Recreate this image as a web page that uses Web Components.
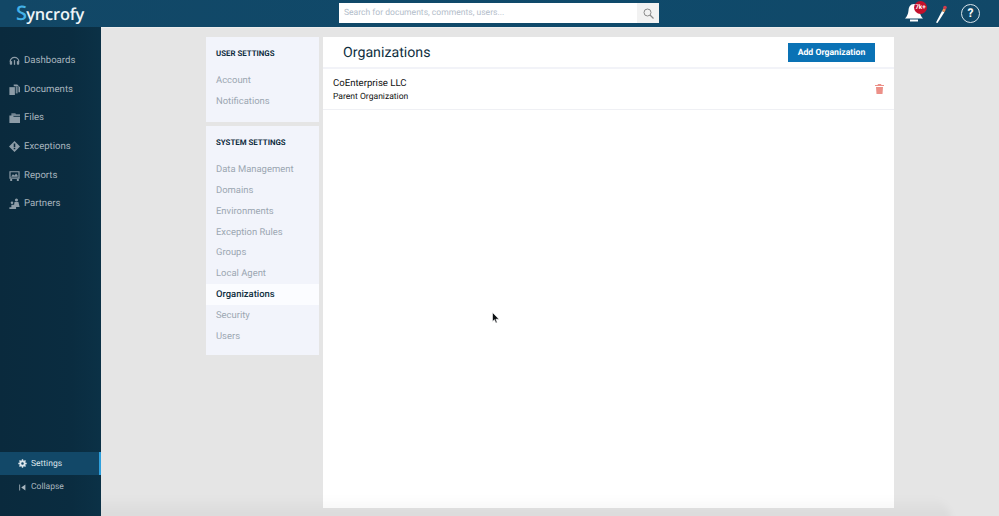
<!DOCTYPE html>
<html>
<head>
<meta charset="utf-8">
<title>Organizations</title>
<style>
  html, body { margin: 0; height: 100%; overflow: hidden; }
  body { font-family: Roboto, "Liberation Sans", sans-serif; background: #e5e5e5; text-rendering: geometricPrecision; }
</style>
</head>
<body>
<app-shell>
  <top-bar slot="top"></top-bar>
  <side-nav slot="side">
    <nav-link icon="dash">Dashboards</nav-link>
    <nav-link icon="docs">Documents</nav-link>
    <nav-link icon="files">Files</nav-link>
    <nav-link icon="warn">Exceptions</nav-link>
    <nav-link icon="reports">Reports</nav-link>
    <nav-link icon="partners">Partners</nav-link>
    <nav-foot slot="foot" icon="gear" active>Settings</nav-foot>
    <nav-foot slot="foot" icon="collapse">Collapse</nav-foot>
  </side-nav>
  <settings-card title="USER SETTINGS" slot="menu" style="height:85px">
    <settings-link>Account</settings-link>
    <settings-link>Notifications</settings-link>
  </settings-card>
  <settings-card title="SYSTEM SETTINGS" slot="menu" style="height:229px">
    <settings-link>Data Management</settings-link>
    <settings-link>Domains</settings-link>
    <settings-link>Environments</settings-link>
    <settings-link>Exception Rules</settings-link>
    <settings-link>Groups</settings-link>
    <settings-link>Local Agent</settings-link>
    <settings-link active>Organizations</settings-link>
    <settings-link>Security</settings-link>
    <settings-link>Users</settings-link>
  </settings-card>
  <org-panel slot="main">
    <org-row name="CoEnterprise LLC" role="Parent Organization"></org-row>
  </org-panel>
</app-shell>

<script>
const icons = {
  dash: '<path d="M1.5 8.500a5.500 5.500 0 0 1 11 0" fill="none" stroke="currentColor" stroke-width="1.6"/><rect x="1" y="7.500" width="3" height="5" rx="1"/><rect x="10" y="7.500" width="3" height="5" rx="1"/><path d="M6.200 6.500h1.600v6H6.200z"/>',
  docs: '<path d="M.5 4h7v10h-7z"/><path d="M8.500 3H11v9H8.500z" opacity=".8"/><path d="M6 .5h4.500L14 4v6.500h-2V3H6z"/>',
  files: '<path d="M3 1.500h5l1 1.500h5v2H3z" opacity=".8"/><path d="M.5 4.500h4.500l1 1.500h8v8H.5z"/>',
  warn: '<path fill-rule="evenodd" d="M7 0l7 7-7 7-7-7zM6 3.300v4.500h2V3.300zM6 8.800v1.800h2V8.800z"/>',
  reports: '<path fill-rule="evenodd" d="M.5 1.500h13v9.500H.5zM2 3v6.500h10V3z"/><path d="M3 8l2-2.500 2 1.500 2-2.500L11 7v1.500H3zM1.500 11.500h2.500V14H1.500zM10 11.500h2.500V14H10z"/>',
  partners: '<circle cx="9.500" cy="2.500" r="2"/><path d="M7 5h5l1.500 6.500H9V14H.5v-2.300H3V8.500h3.500z"/><circle cx="3.800" cy="6" r="1.600"/>',
  gear: '<path fill-rule="evenodd" d="M6 .5h2l.3 1.700 1.200.5L11 1.700l1.300 1.300-1 1.500.5 1.200 1.700.3v2l-1.700.3-.5 1.200 1 1.500-1.300 1.300-1.500-1-1.200.5L8 13.500H6l-.3-1.700-1.200-.5-1.500 1-1.300-1.300 1-1.500-.5-1.200L.5 8V6l1.700-.3.500-1.200-1-1.500L3 1.700l1.500 1 1.200-.5zM7 5a2 2 0 1 0 0 4 2 2 0 0 0 0-4z"/>',
  collapse: '<path d="M2 2.500h1.300v9H2zM11.500 2.500v9L5 7z"/>'
};

class AppShell extends HTMLElement {
  constructor() {
    super();
    this.attachShadow({ mode: 'open' });
    this.shadowRoot.innerHTML = `
      <style>
        :host { display: grid; grid-template: 27px 1fr / 101px 1fr; height: 516px; position: relative; overflow: hidden; }
        .top { grid-column: 1 / 3; }
        .content { display: flex; gap: 4px; padding: 9px 0 8px 105px; min-height: 0; background: #e5e5e5; border-top: 1px solid #ededed; box-sizing: border-box; }
        .menu { display: flex; flex-direction: column; gap: 4px; width: 113px; flex: none; }
        .main { width: 571px; flex: none; display: flex; position: relative; z-index: 1; }
        .shade-clip { position: absolute; left: 101px; right: 0; bottom: 0; height: 30px; overflow: hidden; z-index: 1; pointer-events: none; }
        .shade { position: absolute; left: -10px; right: 48px; bottom: -4px; height: 24px; border-top-right-radius: 24px; background: linear-gradient(rgba(0,0,0,0), rgba(0,0,0,.05)); filter: blur(3px); }
        .cursor { position: absolute; left: 492px; top: 312px; z-index: 2; }
      </style>
      <div class="top"><slot name="top"></slot></div>
      <slot name="side"></slot>
      <div class="content">
        <div class="menu"><slot name="menu"></slot></div>
        <div class="main"><slot name="main"></slot></div>
      </div>
      <div class="shade-clip"><div class="shade"></div></div>
      <svg class="cursor" width="8" height="12" viewBox="0 0 8 12"><path d="M.5.500v9l2-1.800 1.300 3.300 1.400-.6-1.300-3.200H7z" fill="#0b0f12" stroke="#fff" stroke-width=".6"/></svg>
    `;
  }
}

class TopBar extends HTMLElement {
  constructor() {
    super();
    this.attachShadow({ mode: 'open' });
    this.shadowRoot.innerHTML = `
      <style>
        :host { display: flex; align-items: center; height: 27px; background: linear-gradient(90deg, #124766, #0f4a6b 60%, #114868); position: relative; color: #fff; }
        .logo { position: absolute; left: 16px; top: -1px; font: 600 16.400px/28px "Open Sans", "Liberation Sans", sans-serif; letter-spacing: -.2px; display: flex; align-items: baseline; color: #eef4f7; }
        .logo b { color: #43b2e8; font-weight: 600; font-size: 20px; margin-right: -.5px; }
        .search { margin-left: 339px; width: 320px; height: 20px; margin-top: -1px; background: #fff; display: flex; align-items: center; box-sizing: border-box; }
        .search span { flex: 1; padding-left: 5px; font-size: 8.550px; color: #b3bdca; }
        .search i { width: 22px; height: 20px; background: #f2f2f2; display: flex; align-items: center; justify-content: center; }
        .tools { margin-left: auto; display: flex; align-items: center; padding-right: 19px; }
        .bell { position: relative; width: 18px; height: 20px; display: block; }
        .badge { position: absolute; left: 9px; top: -2.500px; width: 13px; height: 13px; border-radius: 50%; background: #c3112c; font-size: 6.500px; font-weight: 700; line-height: 13px; text-align: center; }
        .wand { margin-left: 12px; }
        .help { margin-left: 14px; width: 19px; height: 19px; box-sizing: border-box; border: 1px solid #d8e3ea; border-radius: 50%; font-size: 12px; font-weight: 700; line-height: 17px; text-align: center; }
      </style>
      <div class="logo"><b>S</b>yncrofy</div>
      <div class="search">
        <span>Search for documents, comments, users...</span>
        <i><svg width="11" height="11" viewBox="0 0 11 11" fill="none" stroke="#8b8b8b" stroke-width="1"><circle cx="4.500" cy="4.500" r="3.500"/><path d="M7 7l3.500 3.500" stroke-width="1.300"/></svg></i>
      </div>
      <div class="tools">
        <div class="bell">
          <svg width="18" height="20" viewBox="0 0 18 20" fill="#fff"><path d="M9 0C5 0 3.800 3 3.500 6.500 3.200 10 2 12.500 0 14.500h18c-2-2-3.200-4.500-3.500-8C14.200 3 13 0 9 0z"/><path d="M5 15.500h8V17.500H5z"/></svg>
          <span class="badge">7k+</span>
        </div>
        <svg class="wand" width="12" height="18" viewBox="0 0 12 18"><path d="M1 17.500L7 6l2.400 1.300L2.500 18z" fill="#fff"/><path d="M7 6l1.500-2.800 2.400 1.300-1.500 2.800z" fill="#e8925c"/><circle cx="10" cy="2.500" r="1.800" fill="#cf3b4c"/></svg>
        <div class="help">?</div>
      </div>
    `;
  }
}

class SideNav extends HTMLElement {
  constructor() {
    super();
    this.attachShadow({ mode: 'open' });
    this.shadowRoot.innerHTML = `
      <style>
        :host { display: flex; flex-direction: column; width: 101px; height: 489px; background: linear-gradient(90deg, #0a2a3d, #0a2c40 70%, #0b3146); }
        .links { display: flex; flex-direction: column; padding-top: 19.400px; }
        .foot { margin-top: auto; display: flex; flex-direction: column; padding-bottom: 17px; }
      </style>
      <div class="links"><slot></slot></div>
      <div class="foot"><slot name="foot"></slot></div>
    `;
  }
}

class NavLink extends HTMLElement {
  constructor() {
    super();
    this.attachShadow({ mode: 'open' });
    this.shadowRoot.innerHTML = `
      <style>
        :host { display: flex; align-items: center; height: 28.600px; padding-left: 9px; color: #a9b6bf; font-size: 9.600px; }
        svg { width: 11px; height: 11px; margin-right: 4px; fill: #8d9ca7; color: #8d9ca7; flex: none; }
      </style>
      <svg viewBox="0 0 14 14">${icons[this.getAttribute('icon')]}</svg><slot></slot>
    `;
  }
}

class NavFoot extends HTMLElement {
  constructor() {
    super();
    this.attachShadow({ mode: 'open' });
    const active = this.hasAttribute('active');
    this.shadowRoot.innerHTML = `
      <style>
        :host { display: flex; align-items: center; box-sizing: border-box; height: ${active ? 23 : 24}px; padding-left: 18px; font-size: 8.500px;
          color: ${active ? '#dde6ec' : '#a9b6bf'}; background: ${active ? '#124868' : 'none'}; border-right: ${active ? '2px solid #2e9fdc' : '0'}; }
        svg { width: 9px; height: 9px; margin-right: 4px; fill: currentColor; flex: none; }
      </style>
      <svg viewBox="0 0 14 14">${icons[this.getAttribute('icon')]}</svg><slot></slot>
    `;
  }
}

class SettingsCard extends HTMLElement {
  constructor() {
    super();
    this.attachShadow({ mode: 'open' });
    this.shadowRoot.innerHTML = `
      <style>
        :host { display: block; background: #f2f4fb; box-sizing: border-box; padding-top: 12px; flex: none; }
        h3 { margin: 0 0 11.400px; padding-left: 10px; font-size: 7.850px; line-height: 10px; font-weight: 700; color: #0e2c3e; }
      </style>
      <h3>${this.getAttribute('title')}</h3>
      <slot></slot>
    `;
  }
}

class SettingsLink extends HTMLElement {
  constructor() {
    super();
    this.attachShadow({ mode: 'open' });
    const active = this.hasAttribute('active');
    this.shadowRoot.innerHTML = `
      <style>
        :host { display: flex; align-items: center; height: 20.800px; padding-left: 10px; font-size: 9.450px;
          color: ${active ? '#10303f' : '#9ca7b2'}; background: ${active ? '#fbfcff' : 'none'}; font-weight: ${active ? 500 : 400}; }
      </style>
      <slot></slot>
    `;
  }
}

class OrgPanel extends HTMLElement {
  constructor() {
    super();
    this.attachShadow({ mode: 'open' });
    this.shadowRoot.innerHTML = `
      <style>
        :host { display: block; width: 571px; background: #fff; }
        header { display: flex; align-items: center; justify-content: space-between; height: 30px; padding: 0 19px 0 20px; border-bottom: 2px solid #f2f3f8; }
        h1 { margin: 1px 0 0; font-size: 14.200px; font-weight: 400; color: #10303f; }
        button { width: 87px; height: 19px; border: 0; padding: 1px 0 0; background: #0a72b5; color: #fff; font: 700 8.700px Roboto, sans-serif; text-rendering: geometricPrecision; }
      </style>
      <header><h1>Organizations</h1><button>Add Organization</button></header>
      <slot></slot>
    `;
  }
}

class OrgRow extends HTMLElement {
  constructor() {
    super();
    this.attachShadow({ mode: 'open' });
    this.shadowRoot.innerHTML = `
      <style>
        :host { display: flex; align-items: center; justify-content: space-between; box-sizing: border-box; height: 41px; padding: 0 10px; border-bottom: 1px solid #eff0f4; }
        .text { padding-top: 2px; }
        .name { font-size: 9.600px; line-height: 13px; color: #111; }
        .role { font-size: 8.550px; line-height: 13px; color: #111; margin-top: 1px; }
        svg { margin-bottom: 1px; }
      </style>
      <div class="text"><div class="name">${this.getAttribute('name')}</div><div class="role">${this.getAttribute('role')}</div></div>
      <svg width="9" height="10" viewBox="0 0 9 10" fill="#ec9088"><path d="M3 0h3l.5 1H9v1H0V1h2.500zM1 3h7l-.5 7h-6z"/></svg>
    `;
  }
}

customElements.define('app-shell', AppShell);
customElements.define('top-bar', TopBar);
customElements.define('side-nav', SideNav);
customElements.define('nav-link', NavLink);
customElements.define('nav-foot', NavFoot);
customElements.define('settings-card', SettingsCard);
customElements.define('settings-link', SettingsLink);
customElements.define('org-panel', OrgPanel);
customElements.define('org-row', OrgRow);
</script>
</body>
</html>
